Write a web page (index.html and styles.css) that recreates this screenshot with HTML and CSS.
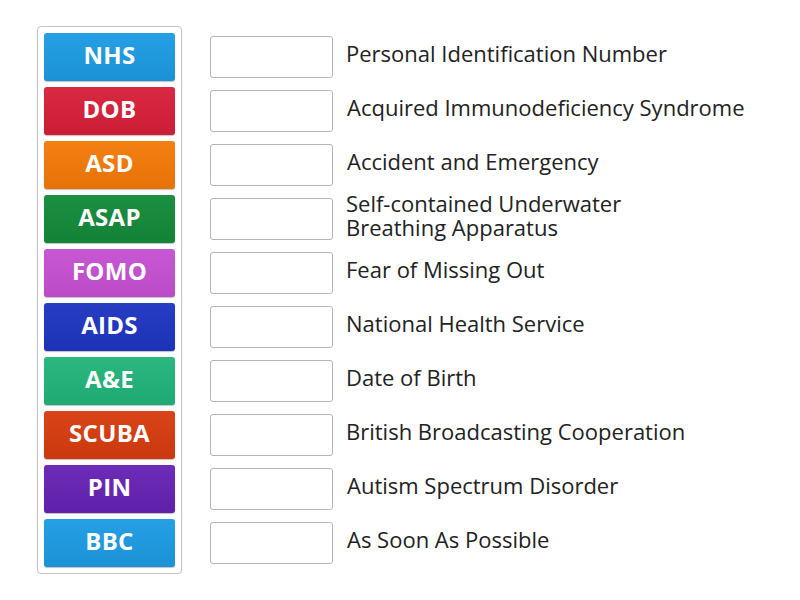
FILE: index.html
```html
<!DOCTYPE html>
<html>
<head>
<meta charset="utf-8">
<link rel="stylesheet" href="styles.css">
</head>
<body>
<div class="page">
  <div class="tiles">
    <div class="tile c1">NHS</div>
    <div class="tile c2">DOB</div>
    <div class="tile c3">ASD</div>
    <div class="tile c4">ASAP</div>
    <div class="tile c5">FOMO</div>
    <div class="tile c6">AIDS</div>
    <div class="tile c7">A&amp;E</div>
    <div class="tile c8">SCUBA</div>
    <div class="tile c9">PIN</div>
    <div class="tile c10">BBC</div>
  </div>
  <div class="answers">
    <div class="row"><div class="slot"></div><div class="label">Personal Identification Number</div></div>
    <div class="row"><div class="slot"></div><div class="label shift">Acquired Immunodeficiency Syndrome</div></div>
    <div class="row"><div class="slot"></div><div class="label shift">Accident and Emergency</div></div>
    <div class="row"><div class="slot"></div><div class="label">Self-contained Underwater<br>Breathing Apparatus</div></div>
    <div class="row"><div class="slot"></div><div class="label">Fear of Missing Out</div></div>
    <div class="row"><div class="slot"></div><div class="label">National Health Service</div></div>
    <div class="row"><div class="slot"></div><div class="label">Date of Birth</div></div>
    <div class="row"><div class="slot"></div><div class="label">British Broadcasting Cooperation</div></div>
    <div class="row"><div class="slot"></div><div class="label shift">Autism Spectrum Disorder</div></div>
    <div class="row"><div class="slot"></div><div class="label shift">As Soon As Possible</div></div>
  </div>
</div>
</body>
</html>
```

FILE: styles.css
```css
html, body {
  margin: 0;
  padding: 0;
  background: #ffffff;
}
body {
  font-family: "Open Sans", "Liberation Sans", sans-serif;
}
.page {
  display: flex;
  align-items: flex-start;
  padding: 26px 0 0 37px;
}
.tiles {
  display: flex;
  flex-direction: column;
  gap: 6px;
  padding: 6px;
  border: 1px solid #c4c4c4;
  border-radius: 4px;
  box-shadow: 0 1px 2px rgba(0,0,0,0.12);
}
.tile {
  width: 131px;
  height: 48px;
  border-radius: 3px;
  color: #ffffff;
  font-weight: 700;
  font-size: 24px;
  letter-spacing: 0.3px;
  line-height: 1;
  padding-bottom: 4px;
  box-sizing: border-box;
  display: flex;
  align-items: center;
  justify-content: center;
  box-shadow: 0 1px 1px rgba(0,0,0,0.25);
  background-image: linear-gradient(to bottom, rgba(255,255,255,0.04), rgba(0,0,0,0.06));
}
.c1 { background-color: #1d9be3; }
.c2 { background-color: #d81f3a; }
.c3 { background-color: #f47a08; }
.c4 { background-color: #138a3a; }
.c5 { background-color: #c650d2; }
.c6 { background-color: #1e36c2; }
.c7 { background-color: #22b47a; }
.c8 { background-color: #d83c0f; }
.c9 { background-color: #6623b4; }
.c10 { background-color: #1d9be3; }

.answers {
  display: flex;
  flex-direction: column;
  gap: 6px;
  padding-top: 7px;
  margin-left: 28px;
}
.row {
  height: 48px;
  display: flex;
  align-items: center;
}
.slot {
  width: 121px;
  height: 40px;
  border: 1px solid #b5b5b5;
  border-radius: 3px;
  background: #ffffff;
  flex-shrink: 0;
}
.label {
  margin-left: 13px;
  font-size: 22px;
  line-height: 24px;
  color: #222222;
  margin-top: -8px;
}
.label.shift {
  margin-left: 14px;
}
```
